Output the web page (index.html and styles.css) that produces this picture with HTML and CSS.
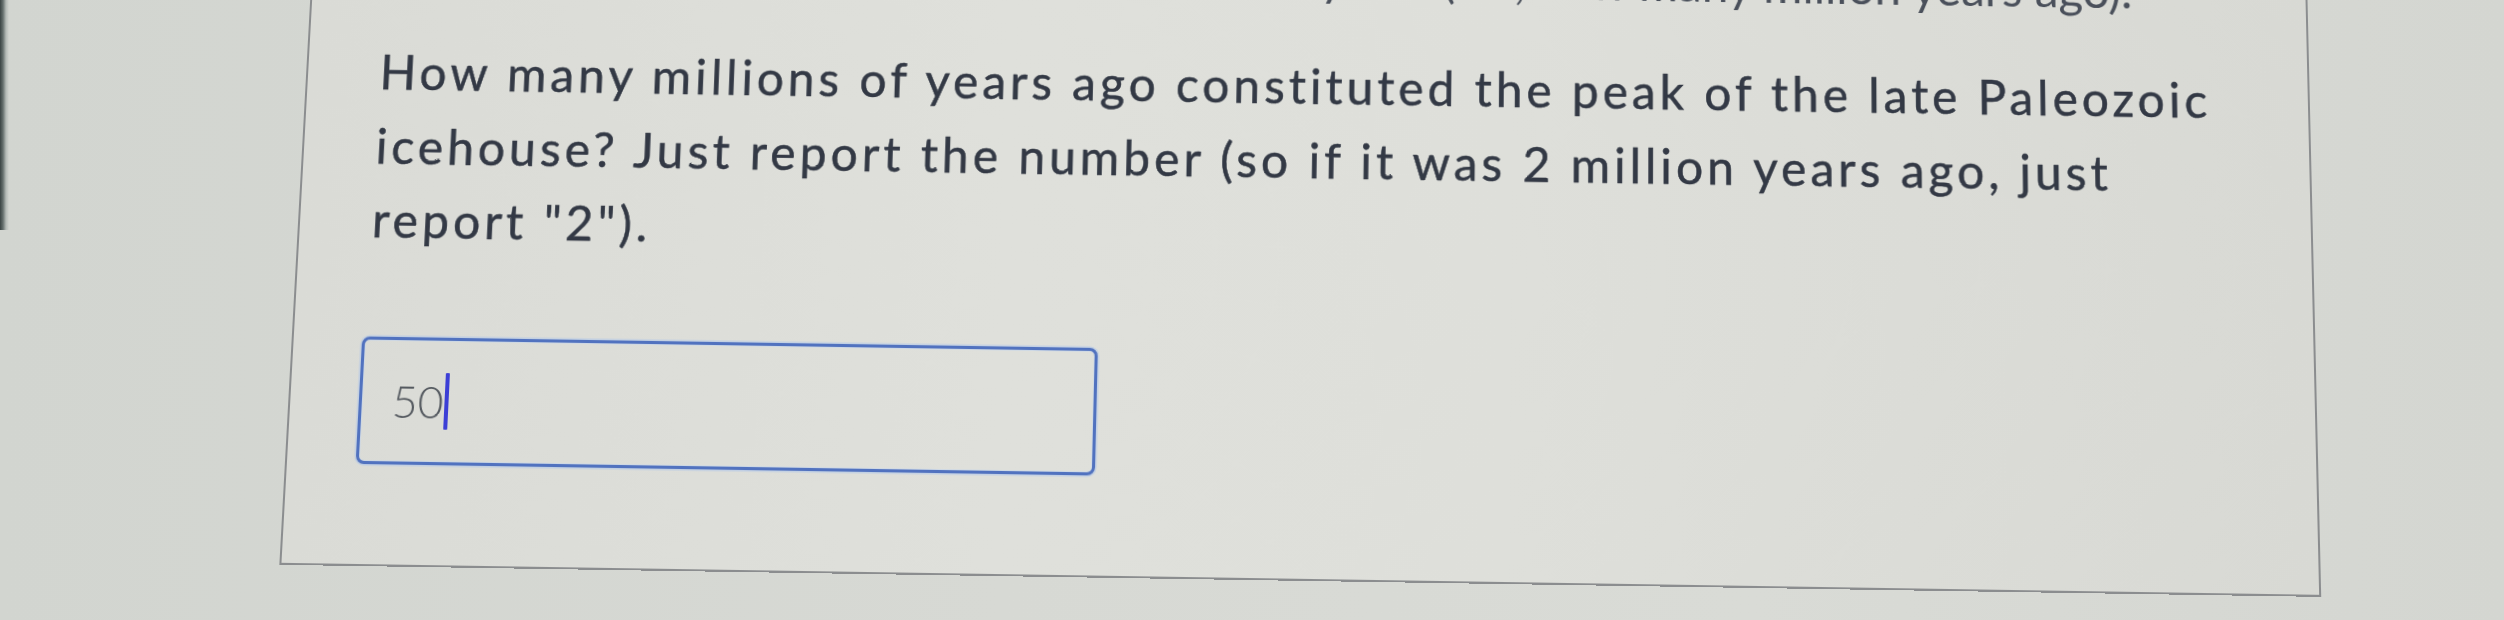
FILE: index.html
```html
<!DOCTYPE html>
<html lang="en">
<head>
<meta charset="utf-8">
<title>Quiz question</title>
<link rel="stylesheet" href="styles.css">
</head>
<body>
<div class="screen">
  <section class="card">
    <p class="prev">Answer in millions of years (i.e., how many million years ago).</p>
    <p class="question">How many millions of years ago constituted the peak of the late Paleozoic icehouse? Just report the number (so if it was 2 million years ago, just report "2").</p>
    <div class="field" role="textbox" aria-label="Answer"><span class="value">50</span><span class="caret"></span></div>
  </section>
</div>
</body>
</html>
```

FILE: styles.css
```css
html, body {
  margin: 0;
  padding: 0;
  width: 2504px;
  height: 620px;
  overflow: hidden;
}

body {
  font-family: Lato, "Noto Sans", "Liberation Sans", sans-serif;
  color: #333945;
  background:
    linear-gradient(to right, #3a4443 0, #66706e 3px, #b4bab6 6px, rgba(213,216,211,0) 9px) no-repeat 0 0 / 10px 230px,
    linear-gradient(to right, #d2d5d0 0, #d7d9d4 40%, #d9dbd6 70%, #d4d6d1 100%);
}

.screen {
  width: 2504px;
  height: 620px;
  transform: rotate(0.9deg) perspective(2000px) rotateX(4.4deg);
  transform-origin: 1308px 300px;
}

.card {
  box-sizing: border-box;
  width: 2014px;
  margin: -82px 0 0 299px;
  padding: 18px 75px 98px 63px;
  border: 2px solid #8b8d8f;
  background: linear-gradient(to right, #dadbd6 0, #dfe0db 35%, #dedfda 60%, #d8d9d4 100%);
}

.prev {
  margin: 0;
  padding-right: 100px;
  font-size: 48px;
  line-height: 74.5px;
  text-align: right;
  white-space: nowrap;
  color: #4a505b;
}

.question {
  margin: 35.5px 0 0;
  padding-left: 9px;
  font-size: 48px;
  line-height: 74.5px;
  letter-spacing: 4.05px;
  -webkit-text-stroke: 0.5px #333945;
}

.field {
  box-sizing: border-box;
  display: flex;
  align-items: center;
  width: 732px;
  height: 126px;
  margin: 79.5px 0 0 5px;
  padding-left: 30px;
  border: 3px solid #5172bf;
  border-radius: 8px;
  box-shadow: 0 0 0 1.5px rgba(170, 195, 235, 0.55), inset 0 0 0 1px rgba(190, 210, 240, 0.5);
  font-size: 44px;
  font-weight: 300;
  color: #555a60;
}

.value {
  line-height: 1;
}

.caret {
  width: 4px;
  height: 56px;
  margin-left: 1px;
  border-radius: 1px;
  background: #3c3fd6;
}
```
